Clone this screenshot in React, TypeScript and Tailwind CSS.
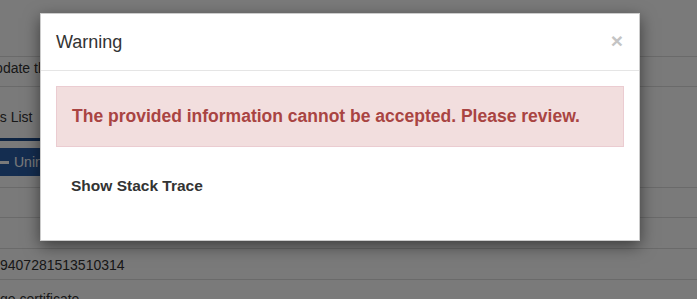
import React from "react";

export default function App() {
  return (
    <div
      className="relative w-[697px] h-[299px] overflow-hidden bg-white text-[#333]"
      style={{ fontFamily: '"Liberation Sans", Arial, sans-serif' }}
    >
      {/* underlying page */}
      <div className="flex flex-col">
        <div className="h-[56px]" />
        <div className="h-[31px] border-t border-b border-[#ddd] -ml-[15px] pt-[2px] text-[14px] leading-[16px] flex items-start">
          <span className="pt-[1px]">Update the certificate settings</span>
        </div>
        <div className="h-[51px] flex items-center -ml-[43px] text-[14px] pt-[10px]">
          Devices List
        </div>
        <div className="h-[10px] w-[130px] border-t-[3px] border-[#1f4d8a]" />
        <div className="h-[28px] w-[120px] bg-[#2a5ea8] flex items-center gap-[5px] text-white text-[14px]">
          <span className="block w-[9px] h-[3px] bg-white" />
          Uninstall
        </div>
        <div className="h-[12px] border-b border-[#ddd]" />
        <div className="h-[30px] border-b border-[#ddd]" />
        <div className="h-[31px] border-b border-[#ddd]" />
        <div className="h-[31px] border-b border-[#ddd] flex items-center pt-[2px] text-[14px]">
          9407281513510314
        </div>
        <div className="h-[31px] flex items-center -ml-[35px] pt-[8px] text-[14px]">
          Manage certificate
        </div>
      </div>

      {/* backdrop */}
      <div className="absolute inset-0 bg-black/[0.52]" />

      {/* modal */}
      <div className="absolute left-[40px] top-[13px] w-[600px] bg-white border border-black/20 shadow-[0_5px_15px_rgba(0,0,0,0.5)]">
        <div className="flex items-center justify-between px-[15px] py-[15px] border-b border-[#e5e5e5]">
          <h4 className="text-[18px] leading-[26px] text-[#333]">Warning</h4>
          <span className="text-[21px] leading-[21px] font-bold text-[#c4c4c4] pr-[1px] -mt-[3px]">×</span>
        </div>
        <div className="px-[15px] pt-[15px] pb-[35px]">
          <div className="border border-[#ebccd1] bg-[#f2dede] px-[15px] py-[15px] text-[#a94442] text-[17.5px] leading-[29px] font-bold">
            The provided information cannot be accepted. Please review.
          </div>
          <div className="mt-[20px] px-[15px] py-[10px] text-[15.5px] leading-[18px] font-bold text-[#333]">
            Show Stack Trace
          </div>
        </div>
      </div>
    </div>
  );
}
